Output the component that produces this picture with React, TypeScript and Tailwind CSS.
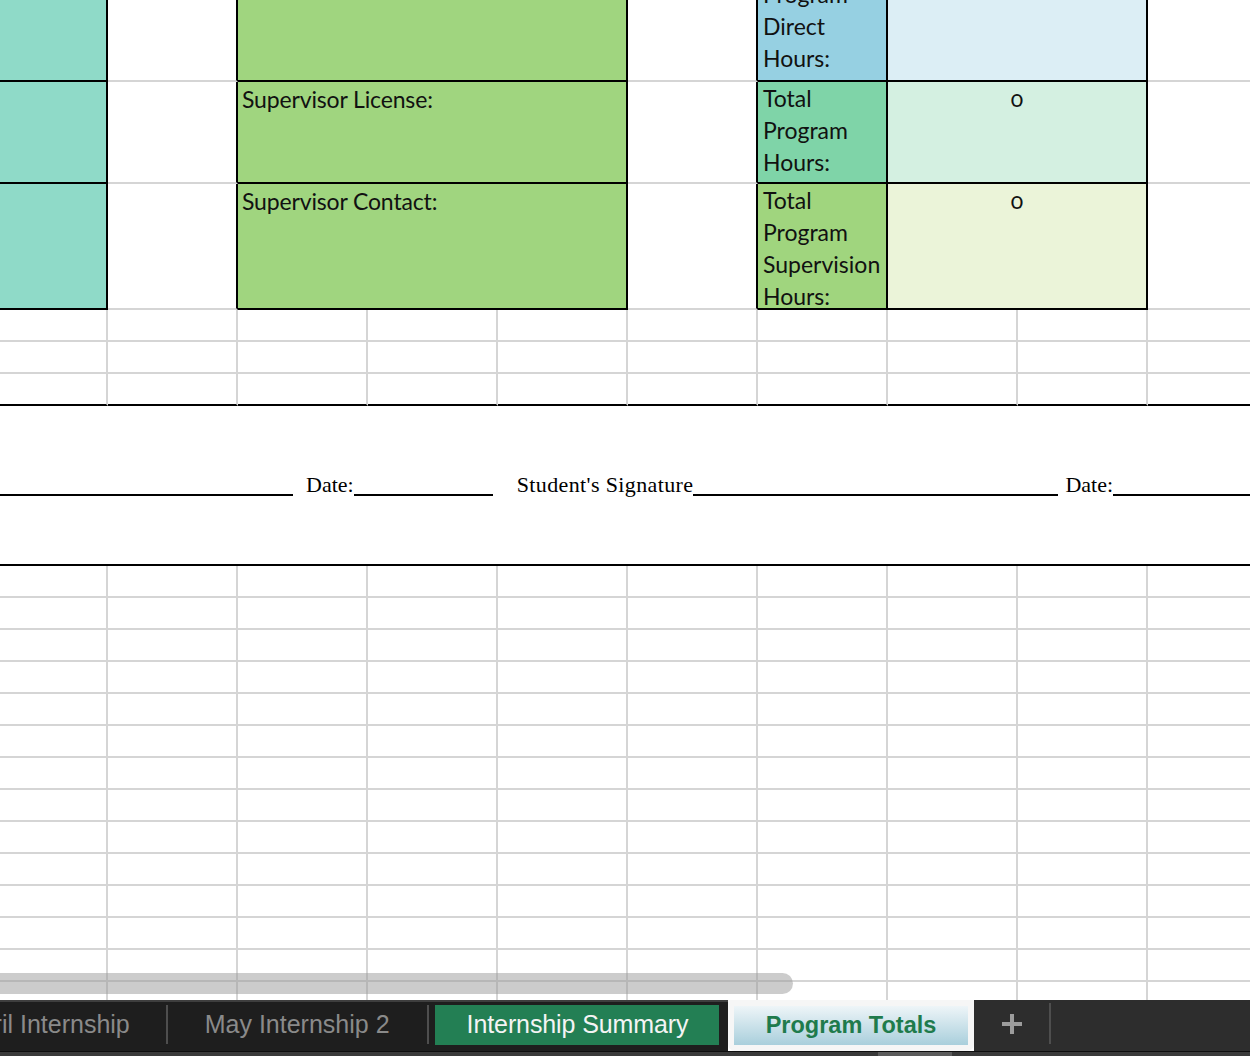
import React from 'react';

// cell borders: grid lines are light grey, table blocks are outlined in black
type Edge = 'black' | 'gray' | 'none';

const RIGHT: Record<Edge, string> = {
  black: 'border-r-2 border-r-black',
  gray: 'border-r-2 border-r-[#d5d5d5]',
  none: '',
};
const BOTTOM: Record<Edge, string> = {
  black: 'border-b-2 border-b-black',
  gray: 'border-b-2 border-b-[#d5d5d5]',
  none: '',
};

const COLS = [108, 130, 130, 130, 130, 130, 130, 130, 130];

interface CellProps {
  w?: number;
  bg?: string;
  right?: Edge;
  bottom?: Edge;
  className?: string;
  children?: React.ReactNode;
}

function Cell({ w, bg = 'bg-white', right = 'gray', bottom = 'gray', className = '', children }: CellProps) {
  return (
    <div
      className={`h-full overflow-hidden ${w ? 'shrink-0' : 'flex-1'} ${bg} ${RIGHT[right]} ${BOTTOM[bottom]} ${className}`}
      style={w ? { width: w } : undefined}
    >
      {children}
    </div>
  );
}

function Lines({ lines }: { lines: string[] }) {
  return (
    <>
      {lines.map((l) => (
        <div key={l} className="whitespace-nowrap">{l}</div>
      ))}
    </>
  );
}

function GridRow({ bottom = 'gray' }: { bottom?: Edge }) {
  return (
    <div className="flex h-[32px]">
      {COLS.map((w, i) => (
        <Cell key={i} w={w} bottom={bottom} />
      ))}
      <Cell bottom={bottom} right="none" />
    </div>
  );
}

const cellText = "font-['Lato','Liberation_Sans',sans-serif] text-[23px] leading-[32px] text-[#111]";

function TopRow({
  h, teal, greenText, label, labelBg, valueBg, value, first,
}: {
  h: number; teal: string; greenText?: string; label: string[]; labelBg: string;
  valueBg: string; value?: string; first?: boolean;
}) {
  return (
    <div className={`flex ${cellText}`} style={{ height: h }}>
      <Cell w={108} bg={teal} right="black" bottom="black" />
      <Cell w={130} right="black" />
      <Cell w={390} bg="bg-[#a0d57f]" right="black" bottom="black" className="px-[4px] pt-[1px]">
        {greenText && <div className="whitespace-nowrap tracking-[-0.15px]">{greenText}</div>}
      </Cell>
      <Cell w={130} right="black" />
      <Cell w={130} bg={labelBg} right="black" bottom="black" className={`px-[5px] ${first ? 'pt-[2px]' : 'pt-0'}`}>
        <Lines lines={label} />
      </Cell>
      <Cell w={260} bg={valueBg} right="black" bottom="black" className="pt-0 text-center oldstyle-nums">
        {value}
      </Cell>
      <Cell right="none" />
    </div>
  );
}

function SignatureRow() {
  return (
    <div className="h-[160px] border-b-2 border-b-black font-['Liberation_Serif','Times_New_Roman',serif] text-[22px] leading-none text-black">
      <div className="h-[90px] flex items-end whitespace-nowrap">
        <span className="w-[293px] shrink-0 border-b-2 border-black" />
        <span className="ml-[13px]">Date:</span>
        <span className="w-[139px] shrink-0 border-b-2 border-black" />
        <span className="ml-[24px] tracking-[0.38px]">Student's Signature</span>
        <span className="w-[365px] shrink-0 border-b-2 border-black" />
        <span className="ml-[7px]">Date:</span>
        <span className="flex-1 border-b-2 border-black" />
      </div>
    </div>
  );
}

function Sheet() {
  return (
    <div className="relative h-[1000px] overflow-hidden bg-white">
      <div className="-mt-[24px]">
        <TopRow
          h={106}
          first
          teal="bg-[#8fdac8]"
          label={['Program', 'Direct', 'Hours:']}
          labelBg="bg-[#96d0e2]"
          valueBg="bg-[#dceef5]"
        />
        <TopRow
          h={102}
          teal="bg-[#8fdac8]"
          greenText="Supervisor License:"
          label={['Total', 'Program', 'Hours:']}
          labelBg="bg-[#7fd4a8]"
          valueBg="bg-[#d4f0e1]"
          value="0"
        />
        <TopRow
          h={126}
          teal="bg-[#8fdac8]"
          greenText="Supervisor Contact:"
          label={['Total', 'Program', 'Supervision', 'Hours:']}
          labelBg="bg-[#a0d57e]"
          valueBg="bg-[#ebf4d9]"
          value="0"
        />
        <GridRow />
        <GridRow />
        <GridRow bottom="black" />
        <SignatureRow />
        {Array.from({ length: 14 }).map((_, i) => (
          <GridRow key={i} />
        ))}
      </div>

      {/* horizontal scrollbar thumb */}
      <div className="absolute left-0 top-[973px] h-[21px] w-[793px] rounded-r-full bg-[#9a9a9a]/50" />
    </div>
  );
}

function Separator() {
  return <div className="w-[2px] shrink-0 bg-[#4e4e4e] mt-[3px] mb-[7px]" />;
}

function TabBar() {
  return (
    <div className="h-[56px] flex flex-col font-['Liberation_Sans','Helvetica',sans-serif]">
      <div className="h-[52px] flex border-b border-b-[#0e0e0e]">
        {/* sheet tabs, scrolled left */}
        <div className="flex-1 flex bg-[#1e1e1e] border-t-2 border-t-[#3e3e3e] overflow-hidden">
          <div className="flex -ml-[75px] shrink-0 text-[25px] text-[#8a8a8a]">
            <div className="pl-[38px] pr-[36px] flex items-center whitespace-nowrap pb-[3px]">April Internship</div>
            <Separator />
            <div className="px-[37px] flex items-center whitespace-nowrap pb-[3px]">May Internship 2</div>
            <Separator />
            <div className="ml-[6px] mt-[3px] mb-[6px] pl-[32px] pr-[31px] flex items-center whitespace-nowrap bg-[#237f54] text-[#f4f4f4] tracking-[-0.1px]">
              Internship Summary
            </div>
          </div>
        </div>

        {/* current tab */}
        <div className="w-[246px] shrink-0 bg-[#f6f6f6] px-[6px] pt-[6px] pb-[6px] rounded-b-[7px]">
          <div className="h-full flex items-center justify-center bg-gradient-to-b from-[#eef5f8] to-[#a9cfdc] text-[23.5px] font-bold text-[#1f7b4c]">
            Program Totals
          </div>
        </div>

        {/* add sheet */}
        <div className="w-[276px] shrink-0 flex bg-[#2d2d2d]">
          <div className="w-[75px] flex items-center justify-center pb-[4px]">
            <svg width="20" height="20" viewBox="0 0 20 20">
              <rect x="0" y="8" width="20" height="4" fill="#9c9c9c" />
              <rect x="8" y="0" width="4" height="20" fill="#9c9c9c" />
            </svg>
          </div>
          <Separator />
        </div>
      </div>
      <div className="relative flex-1 bg-[#3a3a3a]">
        <div className="absolute left-[878px] top-0 h-full w-[74px] bg-[#5c5c5c]" />
      </div>
    </div>
  );
}

export default function App() {
  return (
    <div className="w-[1250px] h-[1056px] overflow-hidden bg-white">
      <Sheet />
      <TabBar />
    </div>
  );
}
